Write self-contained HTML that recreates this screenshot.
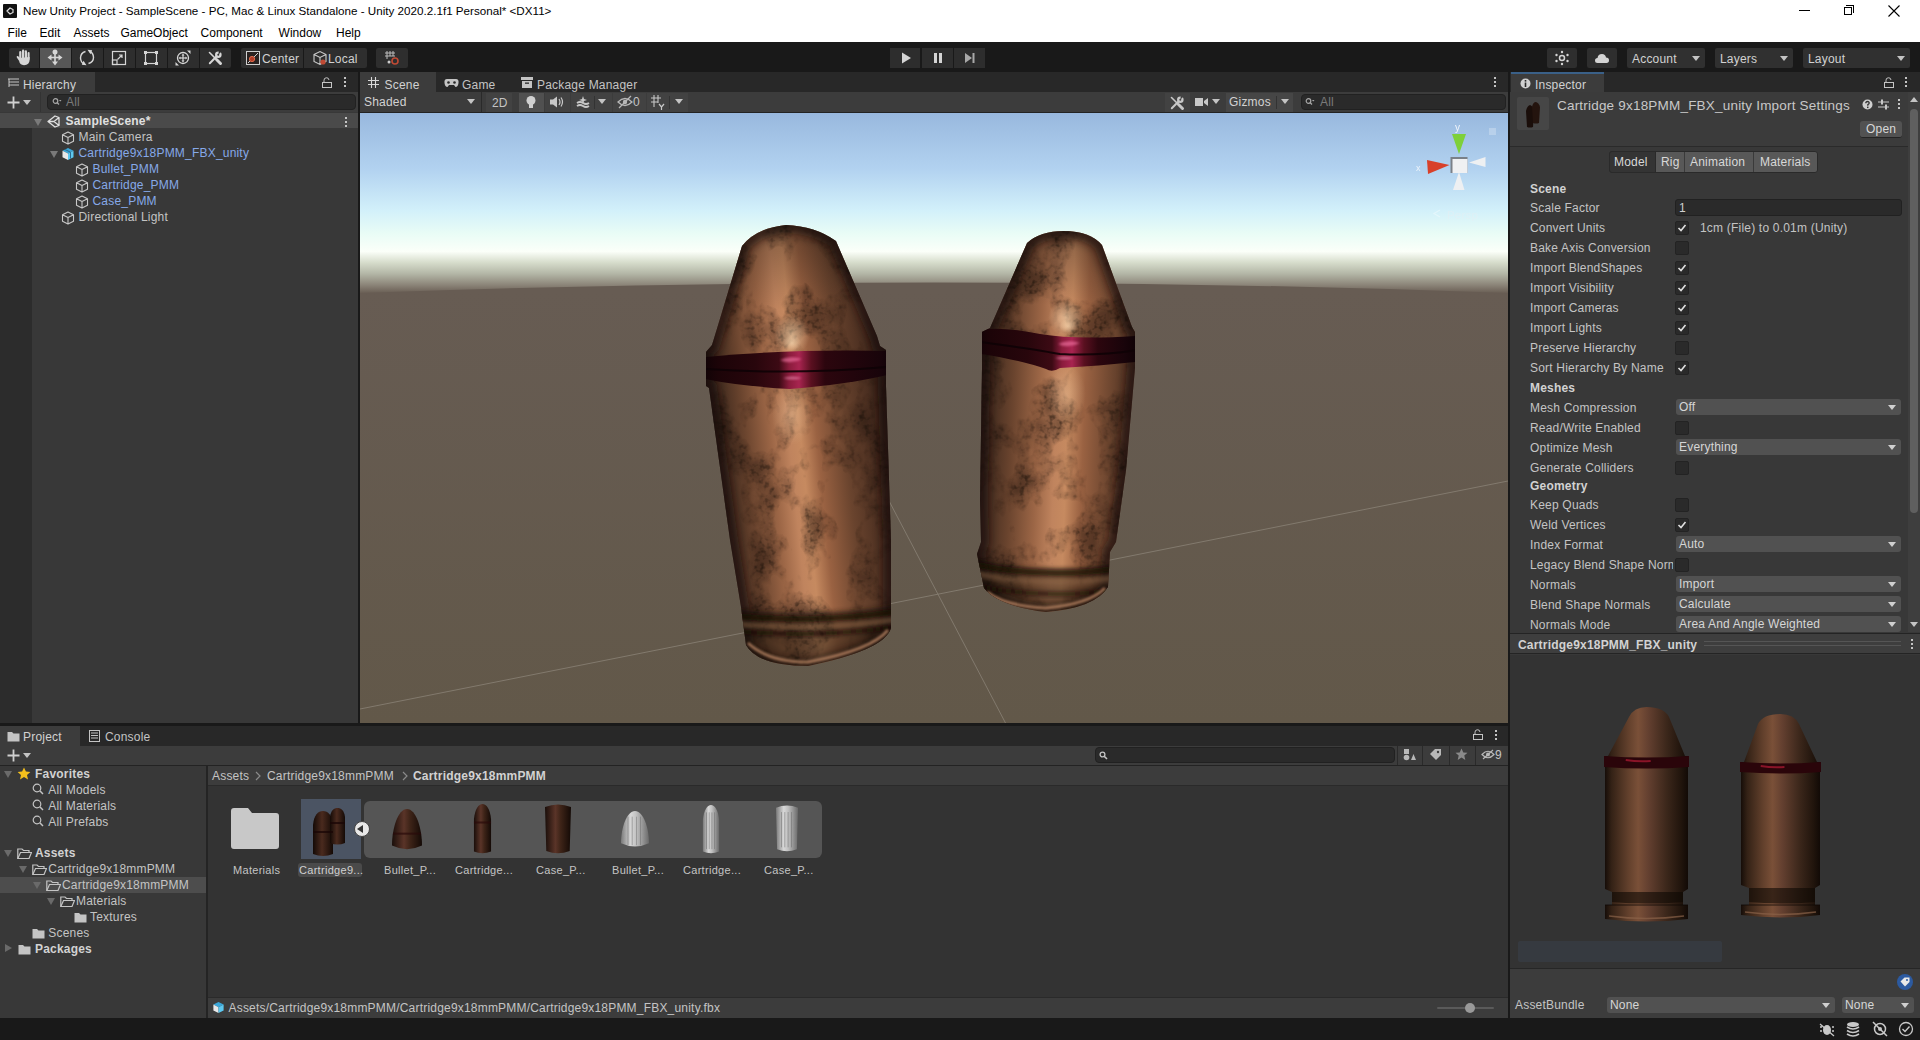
<!DOCTYPE html>
<html><head><meta charset="utf-8">
<style>
*{margin:0;padding:0;box-sizing:border-box}
html,body{width:1920px;height:1040px;overflow:hidden;background:#191919;font-family:"Liberation Sans",sans-serif;font-size:12px;letter-spacing:0.2px;color:#c4c4c4}
.a{position:absolute}
.t{position:absolute;white-space:nowrap;line-height:16px}
#title{left:0;top:0;width:1920px;height:42px;background:#fff;color:#000}
#toolbar{left:0;top:42px;width:1920px;height:30px;background:#191919}
.tb{position:absolute;top:48px;height:20px;background:#2e2e2e;border-radius:2px}
.tabbar{position:absolute;height:20px;background:#282828}
.tab{position:absolute;height:20px;background:#3c3c3c;border-top:1px solid #3c3c3c}
.panel{position:absolute;background:#383838}
.hdr{position:absolute;background:#3c3c3c}
.field{position:absolute;background:#2a2a2a;border:1px solid #212121;border-radius:3px}
.btn{position:absolute;background:#585858;border-radius:3px;border-bottom:1px solid #242424}
.dd{position:absolute;background:#515151;border-radius:3px;height:16px;color:#d8d8d8}
.arr{position:absolute;width:0;height:0;border-left:4px solid transparent;border-right:4px solid transparent;border-top:5px solid #c4c4c4}
.cb{position:absolute;width:14px;height:14px;background:#2a2a2a;border:1px solid #232323;border-radius:2px}
.lbl{position:absolute;left:1530px;white-space:nowrap;line-height:16px;color:#c4c4c4}
.bold{font-weight:bold}
</style></head><body>
<div id="title" class="a"></div>
<div id="toolbar" class="a"></div>

<!-- TITLE -->
<div class="a" style="left:3px;top:4px;width:14px;height:14px;background:#111;border-radius:1px"></div>
<svg class="a" style="left:5px;top:6px" width="10" height="10" viewBox="0 0 10 10"><path d="M2 5 L5 2 L8 3.5 L8 6.5 L5 8 Z" fill="none" stroke="#ddd" stroke-width="1.2"/></svg>
<div class="t" style="left:23px;top:4px;font-size:11.65px;letter-spacing:0;color:#000;line-height:14px">New Unity Project - SampleScene - PC, Mac &amp; Linux Standalone - Unity 2020.2.1f1 Personal* &lt;DX11&gt;</div>
<div class="a" style="left:1799px;top:10px;width:11px;height:1px;background:#000"></div>
<div class="a" style="left:1844px;top:7px;width:8px;height:8px;border:1px solid #000"></div>
<div class="a" style="left:1846px;top:5px;width:8px;height:8px;border-top:1px solid #000;border-right:1px solid #000"></div>
<svg class="a" style="left:1888px;top:5px" width="12" height="12" viewBox="0 0 12 12"><path d="M0.5 0.5 L11.5 11.5 M11.5 0.5 L0.5 11.5" stroke="#000" stroke-width="1.1"/></svg>
<div class="t" style="left:7.6px;top:26px;font-size:12px;letter-spacing:0;color:#000;line-height:14px">File</div>
<div class="t" style="left:39.6px;top:26px;font-size:12px;letter-spacing:0;color:#000;line-height:14px">Edit</div>
<div class="t" style="left:73.6px;top:26px;font-size:12px;letter-spacing:0;color:#000;line-height:14px">Assets</div>
<div class="t" style="left:120.4px;top:26px;font-size:12px;letter-spacing:0;color:#000;line-height:14px">GameObject</div>
<div class="t" style="left:200.6px;top:26px;font-size:12px;letter-spacing:0;color:#000;line-height:14px">Component</div>
<div class="t" style="left:278.6px;top:26px;font-size:12px;letter-spacing:0;color:#000;line-height:14px">Window</div>
<div class="t" style="left:336px;top:26px;font-size:12px;letter-spacing:0;color:#000;line-height:14px">Help</div>



<!-- TOOLBAR -->
<div class="tb" style="left:9px;width:30px;border-radius:2px 0 0 2px"></div>
<div class="tb" style="left:40px;width:31px;background:#575757;border-radius:0"></div>
<div class="tb" style="left:72px;width:31px;border-radius:0"></div>
<div class="tb" style="left:104px;width:31px;border-radius:0"></div>
<div class="tb" style="left:136px;width:31px;border-radius:0"></div>
<div class="tb" style="left:168px;width:31px;border-radius:0"></div>
<div class="tb" style="left:200px;width:31px;border-radius:0 2px 2px 0"></div>
<!-- hand -->
<svg class="a" style="left:16px;top:49px" width="16" height="17" viewBox="0 0 16 17"><g fill="#d6d6d6"><rect x="3.2" y="2" width="2.2" height="9" rx="1.1"/><rect x="6" y="0.5" width="2.2" height="10" rx="1.1"/><rect x="8.8" y="1.2" width="2.2" height="10" rx="1.1"/><rect x="11.6" y="3" width="2" height="8" rx="1"/><path d="M3.2 9 L3.2 12 Q3.5 16 8 16.2 Q13.6 16 13.6 11 L13.6 8 Z"/><path d="M3.5 12.5 L0.8 8.5 Q0.3 7.3 1.3 7 Q2 6.8 2.6 7.6 L4.5 10 Z"/></g></svg>
<!-- move -->
<svg class="a" style="left:47px;top:49px" width="16" height="17" viewBox="0 0 16 17"><g fill="#d6d6d6"><circle cx="8" cy="3" r="2.5"/><path d="M8 16.5 L11 12.5 L5 12.5 Z M0.5 8.5 L4.5 5.5 L4.5 11.5 Z M15.5 8.5 L11.5 5.5 L11.5 11.5 Z"/><rect x="7.2" y="4" width="1.6" height="9"/><rect x="4" y="7.7" width="8" height="1.6"/></g></svg>
<!-- rotate -->
<svg class="a" style="left:79px;top:49px" width="16" height="17" viewBox="0 0 16 17"><path d="M6.5 2.5 Q1.5 4 1.5 9 Q1.8 13.5 5 15" fill="none" stroke="#d6d6d6" stroke-width="1.4"/><path d="M9.5 14.5 Q14.5 13 14.5 8.5 Q14.3 4 11 2.5" fill="none" stroke="#d6d6d6" stroke-width="1.4"/><path d="M8.5 0.8 L13.2 1.2 L11.5 5.2 Z M7.5 16.2 L2.8 15.8 L4.5 11.8 Z" fill="#d6d6d6"/></svg>
<!-- scale -->
<svg class="a" style="left:111px;top:50px" width="16" height="16" viewBox="0 0 16 16"><rect x="1.5" y="1.5" width="13" height="13" fill="none" stroke="#d6d6d6" stroke-width="1.2"/><rect x="1.5" y="10" width="4.5" height="4.5" fill="none" stroke="#d6d6d6" stroke-width="1.2"/><path d="M6.5 9.5 L11 5 M8 5 L11 5 L11 8" fill="none" stroke="#d6d6d6" stroke-width="1.2"/></svg>
<!-- rect -->
<svg class="a" style="left:143px;top:50px" width="16" height="16" viewBox="0 0 16 16"><rect x="2.5" y="2.5" width="11" height="11" fill="none" stroke="#d6d6d6" stroke-width="1.2"/><g fill="#d6d6d6"><rect x="1" y="1" width="3" height="3"/><rect x="12" y="1" width="3" height="3"/><rect x="1" y="12" width="3" height="3"/><rect x="12" y="12" width="3" height="3"/></g></svg>
<!-- transform -->
<svg class="a" style="left:175px;top:50px" width="16" height="16" viewBox="0 0 16 16"><circle cx="8" cy="8" r="5.5" fill="none" stroke="#d6d6d6" stroke-width="1.3"/><g fill="#d6d6d6"><path d="M8 3.5 L9.5 5.5 L6.5 5.5 Z M8 12.5 L9.5 10.5 L6.5 10.5 Z M3.5 8 L5.5 6.5 L5.5 9.5 Z M12.5 8 L10.5 6.5 L10.5 9.5 Z"/><rect x="7.4" y="5" width="1.2" height="6"/><rect x="5" y="7.4" width="6" height="1.2"/><path d="M0.5 15.5 L0.5 12 L4 15.5 Z M15.5 0.5 L15.5 4 L12 0.5 Z"/></g></svg>
<!-- custom -->
<svg class="a" style="left:207px;top:50px" width="16" height="16" viewBox="0 0 16 16"><path d="M2.5 2.5 L9 9" stroke="#d6d6d6" stroke-width="1.6" stroke-linecap="round"/><path d="M9.5 9.5 L13.5 13.5" stroke="#d6d6d6" stroke-width="3" stroke-linecap="round"/><path d="M2.8 13.2 L9.5 6.5" stroke="#d6d6d6" stroke-width="2" stroke-linecap="round"/><circle cx="11.3" cy="4.7" r="3.3" fill="#d6d6d6"/><path d="M11.3 4.7 L15 1 L15 0 L12 0 Z" fill="#2e2e2e"/><circle cx="11.3" cy="4.7" r="1" fill="#2e2e2e"/></svg>

<div class="tb" style="left:241px;width:62px;border-radius:2px 0 0 2px"></div>
<div class="tb" style="left:304px;width:63px;border-radius:0 2px 2px 0"></div>
<svg class="a" style="left:246px;top:51px" width="14" height="14" viewBox="0 0 14 14"><rect x="0.5" y="0.5" width="13" height="13" fill="#2a2220" stroke="#cfcfcf" stroke-width="1"/><path d="M2 12 L12 2" stroke="#cfcfcf" stroke-width="1"/><circle cx="6" cy="8" r="2.6" fill="#b03a26" stroke="#e06a4a" stroke-width="1"/></svg>
<div class="t" style="left:262px;top:51px;color:#d2d2d2">Center</div>
<svg class="a" style="left:312px;top:50px" width="16" height="16" viewBox="0 0 16 16"><path d="M2 4.5 L8 1.5 L14 4.5 L14 11.5 L8 14.5 L2 11.5 Z M2 4.5 L8 7.5 L14 4.5 M8 7.5 L8 14.5" fill="none" stroke="#ccc" stroke-width="1.1"/><circle cx="11" cy="12" r="2.6" fill="#c04a34"/></svg>
<div class="t" style="left:328px;top:51px;color:#d2d2d2">Local</div>
<div class="tb" style="left:376px;width:32px"></div>
<svg class="a" style="left:384px;top:50px" width="16" height="16" viewBox="0 0 16 16"><g stroke="#bbb" stroke-width="1"><path d="M3 1 V9 M6 1 V6 M9 1 V6 M1 3 H11 M1 6 H11"/></g><circle cx="11" cy="11" r="3" fill="none" stroke="#c04a34" stroke-width="1.6"/><circle cx="5" cy="12" r="1.5" fill="#ccc"/></svg>

<!-- play -->
<div class="tb" style="left:890px;width:30px;background:#2d2d2d;border-radius:0"></div>
<div class="tb" style="left:922px;width:31px;background:#2d2d2d;border-radius:0"></div>
<div class="tb" style="left:954px;width:31px;background:#2d2d2d;border-radius:0"></div>
<svg class="a" style="left:898px;top:50px" width="16" height="16" viewBox="0 0 16 16"><path d="M4 2.5 L13 8 L4 13.5 Z" fill="#d4d4d4"/></svg>
<svg class="a" style="left:930px;top:50px" width="16" height="16" viewBox="0 0 16 16"><rect x="4" y="3" width="3" height="10" fill="#d4d4d4"/><rect x="9" y="3" width="3" height="10" fill="#d4d4d4"/></svg>
<svg class="a" style="left:962px;top:50px" width="16" height="16" viewBox="0 0 16 16"><path d="M3 3 L10 8 L3 13 Z" fill="#a8a8a8"/><rect x="10.5" y="3" width="2" height="10" fill="#a8a8a8"/></svg>

<!-- right -->
<div class="tb" style="left:1547px;width:30px"></div>
<svg class="a" style="left:1554px;top:50px" width="16" height="16" viewBox="0 0 16 16"><circle cx="8" cy="8" r="2.5" fill="none" stroke="#d4d4d4" stroke-width="1.5"/><g fill="#d4d4d4"><circle cx="8" cy="2" r="1.2"/><circle cx="8" cy="14" r="1.2"/><circle cx="2.5" cy="5" r="1.2"/><circle cx="13.5" cy="5" r="1.2"/><circle cx="2.5" cy="11" r="1.2"/><circle cx="13.5" cy="11" r="1.2"/></g></svg>
<div class="tb" style="left:1587px;width:30px"></div>
<svg class="a" style="left:1594px;top:50px" width="16" height="16" viewBox="0 0 16 16"><path d="M3.5 13 Q1 13 1 10.5 Q1 8 3.5 8 Q4 4 8 4 Q11.5 4 12 7.5 Q15 7.5 15 10.3 Q15 13 12.5 13 Z" fill="#d4d4d4"/></svg>
<div class="tb" style="left:1627px;width:78px;background:#303030"></div>
<div class="t" style="left:1632px;top:51px;color:#d2d2d2">Account</div>
<div class="arr" style="left:1692px;top:56px"></div>
<div class="tb" style="left:1715px;width:78px;background:#303030"></div>
<div class="t" style="left:1720px;top:51px;color:#d2d2d2">Layers</div>
<div class="arr" style="left:1780px;top:56px"></div>
<div class="tb" style="left:1803px;width:107px;background:#303030"></div>
<div class="t" style="left:1808px;top:51px;color:#d2d2d2">Layout</div>
<div class="arr" style="left:1897px;top:56px"></div>

<!-- Hierarchy -->
<div class="tabbar" style="left:0;top:72px;width:358px"></div>
<div class="tab" style="left:0;top:72px;width:95px"></div>
<div class="hdr" style="left:0;top:92px;width:358px;height:20px"></div>
<div class="panel" style="left:0;top:112px;width:358px;height:611px"></div>


<!-- HIERARCHY CONTENT -->
<div class="a" style="left:0;top:128px;width:32px;height:595px;background:#2c2c2c"></div>
<svg class="a" style="left:8px;top:78px" width="11" height="10" viewBox="0 0 11 10"><path d="M0 1 H11 M2.5 4 H11 M2.5 7 H11 M1 1 V9 M1 4 H2.5 M1 7 H2.5" stroke="#c4c4c4" stroke-width="1"/></svg>
<div class="t" style="left:23px;top:77px;color:#d2d2d2">Hierarchy</div>
<svg class="a" style="left:322px;top:77px" width="10" height="11" viewBox="0 0 10 11"><rect x="0.5" y="5.5" width="9" height="5" fill="none" stroke="#c4c4c4" stroke-width="1"/><path d="M2 5.5 V3.5 A2.5 2.5 0 0 1 7 3" fill="none" stroke="#c4c4c4" stroke-width="1"/></svg>
<div class="a" style="left:344px;top:77px;width:2px;height:2px;background:#c4c4c4;box-shadow:0 4px 0 #c4c4c4,0 8px 0 #c4c4c4"></div>
<svg class="a" style="left:7px;top:96px" width="13" height="13" viewBox="0 0 13 13"><path d="M6.5 0.5 V12.5 M0.5 6.5 H12.5" stroke="#d0d0d0" stroke-width="1.8"/></svg>
<div class="a" style="left:23px;top:100px;width:0;height:0;border-left:4px solid transparent;border-right:4px solid transparent;border-top:5px solid #c4c4c4"></div>
<div class="a" style="left:40px;top:92px;width:1px;height:20px;background:#333"></div>
<div class="field" style="left:47px;top:94px;width:309px;height:16px;border-radius:4px"></div>
<svg class="a" style="left:52px;top:97px" width="10" height="10" viewBox="0 0 10 10"><circle cx="3.5" cy="4" r="2.3" fill="none" stroke="#a8a8a8" stroke-width="1.2"/><path d="M5 5.5 L7 7.5" stroke="#a8a8a8" stroke-width="1.3"/><path d="M7 3 L9.5 3 L8.25 4.5 Z" fill="#a8a8a8"/></svg>
<div class="t" style="left:66px;top:94px;color:#7a7a7a">All</div>
<div class="a" style="left:0;top:113px;width:358px;height:15px;background:#4a4a4a"></div>
<div class="a" style="left:34px;top:119px;width:0;height:0;border-left:4px solid transparent;border-right:4px solid transparent;border-top:7px solid #7a7a7a"></div>
<svg class="a" style="left:47px;top:115px" width="13" height="13" viewBox="0 0 13 13"><path d="M1 6.5 L8 1 L12 2.5 L12 10.5 L8 12 Z M1 6.5 H7 L12 2.5 M7 6.5 L12 10.5" fill="none" stroke="#e0e0e0" stroke-width="1.3" stroke-linejoin="round"/></svg>
<div class="t bold" style="left:65.5px;top:113px;color:#e0e0e0">SampleScene*</div>
<div class="a" style="left:345px;top:117px;width:2px;height:2px;background:#c4c4c4;box-shadow:0 4px 0 #c4c4c4,0 8px 0 #c4c4c4"></div>
<svg class="a" style="left:61px;top:131px" width="14" height="14" viewBox="0 0 14 14"><path d="M7 1 L12.5 3.8 L12.5 10.2 L7 13 L1.5 10.2 L1.5 3.8 Z M1.5 3.8 L7 6.6 L12.5 3.8 M7 6.6 L7 13" fill="none" stroke="#c8c8c8" stroke-width="1.1" stroke-linejoin="round"/></svg>
<div class="t" style="left:78.5px;top:129px">Main Camera</div>
<div class="a" style="left:50px;top:151px;width:0;height:0;border-left:4px solid transparent;border-right:4px solid transparent;border-top:7px solid #7a7a7a"></div>
<svg class="a" style="left:61px;top:147px" width="14" height="14" viewBox="0 0 14 14"><path d="M7 1 L12.5 3.8 L7 6.6 L1.5 3.8 Z" fill="#3aa6d8"/><path d="M1.5 3.8 L7 6.6 L7 13 L1.5 10.2 Z" fill="#e8e8e8"/><path d="M12.5 3.8 L7 6.6 L7 13 L12.5 10.2 Z" fill="#5ec8f0"/><path d="M4 2.5 L9.5 5.2 L9.5 11.6" fill="none" stroke="#2a6a90" stroke-width="1"/></svg>
<div class="t" style="left:78.5px;top:145px;color:#86a9e8">Cartridge9x18PMM_FBX_unity</div>
<svg class="a" style="left:75px;top:163px" width="14" height="14" viewBox="0 0 14 14"><path d="M7 1 L12.5 3.8 L12.5 10.2 L7 13 L1.5 10.2 L1.5 3.8 Z M1.5 3.8 L7 6.6 L12.5 3.8 M7 6.6 L7 13" fill="none" stroke="#c8c8c8" stroke-width="1.1" stroke-linejoin="round"/></svg>
<div class="t" style="left:92.5px;top:161px;color:#86a9e8">Bullet_PMM</div>
<svg class="a" style="left:75px;top:179px" width="14" height="14" viewBox="0 0 14 14"><path d="M7 1 L12.5 3.8 L12.5 10.2 L7 13 L1.5 10.2 L1.5 3.8 Z M1.5 3.8 L7 6.6 L12.5 3.8 M7 6.6 L7 13" fill="none" stroke="#c8c8c8" stroke-width="1.1" stroke-linejoin="round"/></svg>
<div class="t" style="left:92.5px;top:177px;color:#86a9e8">Cartridge_PMM</div>
<svg class="a" style="left:75px;top:195px" width="14" height="14" viewBox="0 0 14 14"><path d="M7 1 L12.5 3.8 L12.5 10.2 L7 13 L1.5 10.2 L1.5 3.8 Z M1.5 3.8 L7 6.6 L12.5 3.8 M7 6.6 L7 13" fill="none" stroke="#c8c8c8" stroke-width="1.1" stroke-linejoin="round"/></svg>
<div class="t" style="left:92.5px;top:193px;color:#86a9e8">Case_PMM</div>
<svg class="a" style="left:61px;top:211px" width="14" height="14" viewBox="0 0 14 14"><path d="M7 1 L12.5 3.8 L12.5 10.2 L7 13 L1.5 10.2 L1.5 3.8 Z M1.5 3.8 L7 6.6 L12.5 3.8 M7 6.6 L7 13" fill="none" stroke="#c8c8c8" stroke-width="1.1" stroke-linejoin="round"/></svg>
<div class="t" style="left:78.5px;top:209px">Directional Light</div>

<!-- Scene -->
<div class="tabbar" style="left:360px;top:72px;width:1148px"></div>
<div class="tab" style="left:360px;top:72px;width:76px"></div>
<div class="hdr" style="left:360px;top:92px;width:1148px;height:20px"></div>
<div class="a" style="left:360px;top:112px;width:1148px;height:1px;background:#232323"></div>
<svg class="a" style="left:368px;top:77px" width="11" height="11" viewBox="0 0 11 11"><path d="M3.5 0 V11 M7.5 0 V11 M0 3.5 H11 M0 7.5 H11" stroke="#d8d8d8" stroke-width="1.1"/></svg>
<div class="t" style="left:384.5px;top:77px;color:#d2d2d2">Scene</div>
<svg class="a" style="left:444px;top:78px" width="15" height="10" viewBox="0 0 15 10"><path d="M3 1 H12 Q15 1 14.5 5 Q14 9 11.5 9 L10 7 H5 L3.5 9 Q1 9 0.5 5 Q0 1 3 1 Z" fill="#c4c4c4"/><circle cx="4.5" cy="4.5" r="1.3" fill="#282828"/><circle cx="10.5" cy="4.5" r="1.3" fill="#282828"/></svg>
<div class="t" style="left:462px;top:77px">Game</div>
<svg class="a" style="left:521px;top:77px" width="12" height="11" viewBox="0 0 12 11"><rect x="0" y="0" width="12" height="3" fill="#c4c4c4"/><path d="M1 4 H11 V11 H1 Z" fill="#c4c4c4"/><rect x="4" y="5.5" width="4" height="1.3" fill="#282828"/></svg>
<div class="t" style="left:537px;top:77px">Package Manager</div>
<div class="a" style="left:1494px;top:77px;width:2px;height:2px;background:#c4c4c4;box-shadow:0 4px 0 #c4c4c4,0 8px 0 #c4c4c4"></div>
<!-- scene toolbar -->
<div class="t" style="left:364px;top:94px;color:#d2d2d2">Shaded</div>
<div class="arr" style="left:467px;top:99px;border-top-color:#c4c4c4"></div>
<div class="a" style="left:481px;top:92px;width:1px;height:20px;background:#2a2a2a"></div>
<div class="a" style="left:486px;top:93px;width:26px;height:19px;background:#424242"></div>
<div class="t" style="left:492px;top:95px;color:#c4c4c4">2D</div>
<div class="a" style="left:519px;top:93px;width:25px;height:19px;background:#505050"></div>
<div class="a" style="left:545px;top:93px;width:25px;height:19px;background:#424242"></div>
<div class="a" style="left:571px;top:93px;width:41px;height:19px;background:#424242"></div>
<div class="a" style="left:613px;top:93px;width:33px;height:19px;background:#424242"></div>
<div class="a" style="left:647px;top:93px;width:41px;height:19px;background:#424242"></div>
<svg class="a" style="left:525px;top:95px" width="12" height="15" viewBox="0 0 12 15"><circle cx="6" cy="5.5" r="4.5" fill="#d0d0d0"/><rect x="4" y="9" width="4" height="4" fill="#d0d0d0"/></svg>
<svg class="a" style="left:550px;top:96px" width="14" height="12" viewBox="0 0 14 12"><rect x="0" y="3.5" width="3" height="5" fill="#c8c8c8"/><path d="M3 3.5 L7 0.5 V11.5 L3 8.5 Z" fill="#c8c8c8"/><path d="M9 3 Q11 6 9 9 M11 1.5 Q14 6 11 10.5" fill="none" stroke="#c8c8c8" stroke-width="1.2"/></svg>
<svg class="a" style="left:576px;top:95px" width="15" height="14" viewBox="0 0 15 14"><path d="M1 8 Q4 6 7 8 Q10 10 13 8 M1 11 Q4 9 7 11 Q10 13 13 11" fill="none" stroke="#c8c8c8" stroke-width="1.8"/><path d="M7 1 L8 4 L11 5 L8 6 L7 9 L6 6 L3 5 L6 4 Z" fill="#c8c8c8"/></svg>
<div class="a" style="left:594px;top:96px;width:1px;height:13px;background:#333"></div>
<div class="arr" style="left:598px;top:99px;border-top-color:#c4c4c4"></div>
<svg class="a" style="left:617px;top:95px" width="16" height="14" viewBox="0 0 16 14"><path d="M1 7 Q8 0 15 7 Q8 14 1 7 Z" fill="none" stroke="#b8b8b8" stroke-width="1.3"/><circle cx="8" cy="7" r="2.2" fill="#b8b8b8"/><path d="M2 13 L14 1" stroke="#b8b8b8" stroke-width="1.3"/></svg>
<div class="t" style="left:633px;top:94px;color:#c4c4c4">0</div>
<svg class="a" style="left:651px;top:95px" width="14" height="15" viewBox="0 0 14 15"><path d="M3 0 V12 M7 0 V8 M0 3 H10 M0 7 H7" stroke="#c8c8c8" stroke-width="1.1"/><path d="M8 9 L10.5 12 L13 9 M10.5 12 V15" fill="none" stroke="#c8c8c8" stroke-width="1.2"/></svg>
<div class="a" style="left:669px;top:96px;width:1px;height:13px;background:#333"></div>
<div class="arr" style="left:675px;top:99px;border-top-color:#c4c4c4"></div>
<!-- right -->
<div class="a" style="left:1165px;top:93px;width:25px;height:19px;background:#424242"></div>
<svg class="a" style="left:1169px;top:95px" width="16" height="16" viewBox="0 0 16 16"><path d="M2.5 2.5 L9 9" stroke="#c8c8c8" stroke-width="1.6" stroke-linecap="round"/><path d="M9.5 9.5 L13.5 13.5" stroke="#c8c8c8" stroke-width="3" stroke-linecap="round"/><path d="M2.8 13.2 L9.5 6.5" stroke="#c8c8c8" stroke-width="2" stroke-linecap="round"/><circle cx="11.3" cy="4.7" r="3.3" fill="#c8c8c8"/><path d="M11.3 4.7 L15 1 L15 0 L12 0 Z" fill="#424242"/><circle cx="11.3" cy="4.7" r="1" fill="#424242"/></svg>
<div class="a" style="left:1191px;top:93px;width:34px;height:19px;background:#3c3c3c"></div>
<svg class="a" style="left:1195px;top:97px" width="13" height="10" viewBox="0 0 13 10"><rect x="0" y="1" width="8" height="8" fill="#c8c8c8"/><path d="M9 4 L13 1 V9 L9 6 Z" fill="#c8c8c8"/></svg>
<div class="arr" style="left:1212px;top:99px;border-top-color:#c4c4c4"></div>
<div class="a" style="left:1226px;top:93px;width:67px;height:19px;background:#464646"></div>
<div class="t" style="left:1229px;top:94px;color:#d2d2d2">Gizmos</div>
<div class="a" style="left:1276px;top:96px;width:1px;height:13px;background:#333"></div>
<div class="arr" style="left:1281px;top:99px;border-top-color:#c4c4c4"></div>
<div class="field" style="left:1301px;top:94px;width:205px;height:16px;border-radius:4px"></div>
<svg class="a" style="left:1305px;top:97px" width="10" height="10" viewBox="0 0 10 10"><circle cx="3.5" cy="4" r="2.3" fill="none" stroke="#a8a8a8" stroke-width="1.2"/><path d="M5 5.5 L7 7.5" stroke="#a8a8a8" stroke-width="1.3"/><path d="M7 3 L9.5 3 L8.25 4.5 Z" fill="#a8a8a8"/></svg>
<div class="t" style="left:1320px;top:94px;color:#7a7a7a">All</div>
<svg class="a" style="left:360px;top:113px" width="1148" height="610" viewBox="360 113 1148 610">
<defs>
<linearGradient id="sky" x1="0" y1="113" x2="0" y2="300" gradientUnits="userSpaceOnUse">
<stop offset="0" stop-color="#98b8de"/>
<stop offset="0.3" stop-color="#b2d2f0"/>
<stop offset="0.52" stop-color="#d2f0fa"/>
<stop offset="0.64" stop-color="#e8fcf6"/>
<stop offset="0.74" stop-color="#fbfff9"/>
<stop offset="0.8" stop-color="#d6dccb"/>
<stop offset="0.86" stop-color="#b3b6a6"/>
<stop offset="0.92" stop-color="#8b8478"/>
<stop offset="0.96" stop-color="#6c6157"/>
<stop offset="1" stop-color="#675c52"/>
</linearGradient>
<linearGradient id="gnd" x1="0" y1="290" x2="0" y2="723" gradientUnits="userSpaceOnUse">
<stop offset="0" stop-color="#675c53"/>
<stop offset="1" stop-color="#625849"/>
</linearGradient>
<linearGradient id="cop1" x1="706" y1="0" x2="892" y2="0" gradientUnits="userSpaceOnUse">
<stop offset="0" stop-color="#1e140e"/>
<stop offset="0.07" stop-color="#3e2a1c"/>
<stop offset="0.2" stop-color="#6a4630"/>
<stop offset="0.34" stop-color="#94623f"/>
<stop offset="0.46" stop-color="#c28a5c"/>
<stop offset="0.53" stop-color="#ba8256"/>
<stop offset="0.66" stop-color="#8c5c3c"/>
<stop offset="0.8" stop-color="#64422c"/>
<stop offset="0.91" stop-color="#422c1e"/>
<stop offset="1" stop-color="#1c130c"/>
</linearGradient>
<linearGradient id="cop2" x1="978" y1="0" x2="1136" y2="0" gradientUnits="userSpaceOnUse">
<stop offset="0" stop-color="#1e140e"/>
<stop offset="0.07" stop-color="#3e2a1c"/>
<stop offset="0.2" stop-color="#6a4630"/>
<stop offset="0.38" stop-color="#94623f"/>
<stop offset="0.5" stop-color="#c28a5c"/>
<stop offset="0.5700000000000001" stop-color="#ba8256"/>
<stop offset="0.7000000000000001" stop-color="#8c5c3c"/>
<stop offset="0.8" stop-color="#64422c"/>
<stop offset="0.91" stop-color="#422c1e"/>
<stop offset="1" stop-color="#1c130c"/>
</linearGradient>
<linearGradient id="band1" x1="706" y1="0" x2="886" y2="0" gradientUnits="userSpaceOnUse">
<stop offset="0" stop-color="#22060a"/>
<stop offset="0.3" stop-color="#320810"/>
<stop offset="0.42" stop-color="#440a18"/>
<stop offset="0.49" stop-color="#a02850"/>
<stop offset="0.56" stop-color="#6a1428"/>
<stop offset="0.75" stop-color="#320810"/>
<stop offset="1" stop-color="#1a0408"/>
</linearGradient>
<linearGradient id="band2" x1="982" y1="0" x2="1135" y2="0" gradientUnits="userSpaceOnUse">
<stop offset="0" stop-color="#22060a"/>
<stop offset="0.3" stop-color="#320810"/>
<stop offset="0.47" stop-color="#440a18"/>
<stop offset="0.55" stop-color="#a02850"/>
<stop offset="0.63" stop-color="#6a1428"/>
<stop offset="0.8" stop-color="#320810"/>
<stop offset="1" stop-color="#1a0408"/>
</linearGradient>
<radialGradient id="spec" cx="0.5" cy="0.5" r="0.5">
<stop offset="0" stop-color="#ffe0b8" stop-opacity="0.55"/>
<stop offset="1" stop-color="#ffe0b8" stop-opacity="0"/>
</radialGradient>
<linearGradient id="vshade" x1="0" y1="0" x2="0" y2="1">
<stop offset="0" stop-color="#000" stop-opacity="0.15"/>
<stop offset="0.5" stop-color="#000" stop-opacity="0"/>
<stop offset="1" stop-color="#000" stop-opacity="0.1"/>
</linearGradient>
<filter id="blur4" x="-20%" y="-20%" width="140%" height="140%"><feGaussianBlur stdDeviation="5"/></filter>
<filter id="blur1" x="-20%" y="-20%" width="140%" height="140%"><feGaussianBlur stdDeviation="0.8"/></filter>
<filter id="blur2" x="-20%" y="-20%" width="140%" height="140%"><feGaussianBlur stdDeviation="2"/></filter>
<linearGradient id="topdark" x1="0" y1="0" x2="0" y2="1"><stop offset="0" stop-color="#000" stop-opacity="0.35"/><stop offset="1" stop-color="#000" stop-opacity="0"/></linearGradient>
<filter id="grunge" x="0" y="0" width="100%" height="100%" color-interpolation-filters="sRGB">
<feTurbulence type="fractalNoise" baseFrequency="0.028 0.02" numOctaves="4" seed="7" result="n1"/>
<feColorMatrix in="n1" values="0 0 0 0 0.12  0 0 0 0 0.07  0 0 0 0 0.05  0 0 0 -3.2 1.75" result="a1"/>
<feTurbulence type="fractalNoise" baseFrequency="0.2" numOctaves="2" seed="11" result="n2"/>
<feColorMatrix in="n2" values="0 0 0 0 0.08  0 0 0 0 0.05  0 0 0 0 0.03  0 0 0 -3 1.6" result="a2"/>
<feComposite in="a2" in2="a1" operator="in" result="sp"/>
<feComponentTransfer in="a1" result="a1s"><feFuncA type="linear" slope="0.6"/></feComponentTransfer>
<feMerge><feMergeNode in="a1s"/><feMergeNode in="sp"/></feMerge>
</filter>
</defs>
<rect x="360" y="113" width="1148" height="610" fill="url(#gnd)"/>
<path d="M360 113 H1508 V293 Q934 272 360 293 Z" fill="url(#sky)"/>
<!-- grid lines -->
<path d="M360 709 L1508 481" stroke="#8a8276" stroke-width="1" opacity="0.8"/>
<path d="M866 457 L1005.5 723" stroke="#8a8276" stroke-width="1" opacity="0.8"/>

<!-- left bullet -->
<defs><linearGradient id="gL" x1="706" y1="0" x2="891" y2="0" gradientUnits="userSpaceOnUse" gradientTransform="matrix(1 0 0.1 1 -38.8 0)"><stop offset="0.000" stop-color="#1c120c"/><stop offset="0.065" stop-color="#402a1e"/><stop offset="0.184" stop-color="#6a442e"/><stop offset="0.324" stop-color="#9c6646"/><stop offset="0.422" stop-color="#c0845e"/><stop offset="0.486" stop-color="#c68a60"/><stop offset="0.573" stop-color="#9a6242"/><stop offset="0.724" stop-color="#6a442e"/><stop offset="0.876" stop-color="#4a2e20"/><stop offset="0.968" stop-color="#2a1a12"/><stop offset="1.000" stop-color="#180e08"/></linearGradient></defs>
<clipPath id="cL"><path d="M786 225 Q815 226 836 241 L877 336 L880 346 L886 350 L886 386 L891 540 L891 628 Q885 650 808 666 Q758 666 746 645 L741 607 L730 540 L709 388 L706 386 L706 352 L712 345 L742 246 Q756 228 786 225 Z"/></clipPath>
<g clip-path="url(#cL)">
<rect x="696" y="200" width="205" height="480" fill="url(#gL)"/>
<path d="M786 225 Q815 226 836 241 L877 336 L880 346 L886 350 L886 386 L891 540 L891 628 Q885 650 808 666 Q758 666 746 645 L741 607 L730 540 L709 388 L706 386 L706 352 L712 345 L742 246 Q756 228 786 225 Z" fill="none" stroke="#1a100a" stroke-width="16" filter="url(#blur4)" opacity="0.7"/>
<rect x="696" y="200" width="205" height="480" filter="url(#grunge)" opacity="0.7"/>
<rect x="696" y="220" width="205" height="90" fill="url(#topdark)"/>
<ellipse cx="792" cy="335" rx="18" ry="20" fill="url(#spec)" opacity="1"/><ellipse cx="792" cy="343" rx="9" ry="8" fill="url(#spec)" opacity="1"/>
<ellipse cx="792" cy="415" rx="20" ry="30" fill="url(#spec)" opacity="0.5"/>
<!-- bottom -->
<path d="M696 604 Q798.5 620 901 604 L901 700 L696 700 Z" fill="#1e140c" opacity="0.45" filter="url(#blur2)"/><path d="M696 608 Q798.5 624 901 608 L901 614 Q798.5 630 696 614 Z" fill="#120a06" opacity="0.75" filter="url(#blur2)"/><path d="M696 616 Q798.5 632 901 616 L901 622 Q798.5 638 696 622 Z" fill="#9a7050" opacity="0.45" filter="url(#blur2)"/><path d="M696 624 Q798.5 640 901 624 L901 628 Q798.5 644 696 628 Z" fill="#120a06" opacity="0.75" filter="url(#blur2)"/><path d="M748 643 Q768 662 808 662 Q872 650 888 630" fill="none" stroke="#c08a68" stroke-width="3" opacity="0.75" filter="url(#blur1)"/>
<!-- band -->
<path d="M705 357 Q790 349 887 351 L887 375 Q850 384 790 389 Q740 386 705 379 Z" fill="url(#bdL)"/>
<path d="M705 369 Q790 375 887 367" fill="none" stroke="#0e0206" stroke-width="2" opacity="0.9"/>
<path d="M780 360 Q790 355 802 359 Q790 365 780 360 Z" fill="#ff80b0" opacity="0.55" filter="url(#blur1)"/>
<path d="M783 378 Q792 375 802 378 Q792 381 783 378 Z" fill="#ffa0c8" opacity="0.5" filter="url(#blur1)"/>
</g>
<defs><linearGradient id="bdL" x1="706" y1="0" x2="891" y2="0" gradientUnits="userSpaceOnUse"><stop offset="0.000" stop-color="#120306"/><stop offset="0.065" stop-color="#1c0408"/><stop offset="0.265" stop-color="#28060c"/><stop offset="0.395" stop-color="#3c0a14"/><stop offset="0.449" stop-color="#8a1c3c"/><stop offset="0.503" stop-color="#a82450"/><stop offset="0.568" stop-color="#5a1020"/><stop offset="0.643" stop-color="#2c060e"/><stop offset="0.946" stop-color="#18040a"/><stop offset="1.000" stop-color="#100206"/></linearGradient></defs>

<!-- right bullet -->
<defs><linearGradient id="gR" x1="978" y1="0" x2="1135" y2="0" gradientUnits="userSpaceOnUse" gradientTransform="matrix(1 0 -0.04 1 14.8 0)"><stop offset="0.000" stop-color="#1c120c"/><stop offset="0.076" stop-color="#402a1e"/><stop offset="0.229" stop-color="#6a442e"/><stop offset="0.395" stop-color="#9c6646"/><stop offset="0.510" stop-color="#c0845e"/><stop offset="0.586" stop-color="#c68a60"/><stop offset="0.688" stop-color="#9a6242"/><stop offset="0.866" stop-color="#6a442e"/><stop offset="1.000" stop-color="#4a2e20"/><stop offset="0.962" stop-color="#2a1a12"/><stop offset="1.000" stop-color="#180e08"/></linearGradient></defs>
<clipPath id="cR"><path d="M1064 231 Q1090 231 1102 245 L1132 327 L1135 332 L1135 368 L1126 470 L1116 542 L1110 552 L1108 587 Q1095 608 1046 612 Q998 606 984 588 L977 554 L981 542 L980 500 L982 368 L982 332 L990 328 L1027 243 Q1040 231 1064 231 Z"/></clipPath>
<g clip-path="url(#cR)">
<rect x="968" y="200" width="177" height="480" fill="url(#gR)"/>
<path d="M1064 231 Q1090 231 1102 245 L1132 327 L1135 332 L1135 368 L1126 470 L1116 542 L1110 552 L1108 587 Q1095 608 1046 612 Q998 606 984 588 L977 554 L981 542 L980 500 L982 368 L982 332 L990 328 L1027 243 Q1040 231 1064 231 Z" fill="none" stroke="#1a100a" stroke-width="16" filter="url(#blur4)" opacity="0.7"/>
<rect x="968" y="200" width="177" height="480" filter="url(#grunge)" opacity="0.7"/>
<rect x="968" y="225" width="177" height="80" fill="url(#topdark)"/>
<ellipse cx="1066" cy="318" rx="18" ry="18" fill="url(#spec)" opacity="1"/><ellipse cx="1068" cy="326" rx="9" ry="7" fill="url(#spec)" opacity="1"/>
<ellipse cx="1066" cy="394" rx="20" ry="30" fill="url(#spec)" opacity="0.5"/>
<!-- bottom -->
<path d="M968 558 Q1056.5 578 1145 558 L1145 700 L968 700 Z" fill="#1e140c" opacity="0.45" filter="url(#blur2)"/><path d="M968 560 Q1056.5 580 1145 560 L1145 566 Q1056.5 586 968 566 Z" fill="#120a06" opacity="0.75" filter="url(#blur2)"/><path d="M968 569 Q1056.5 589 1145 569 L1145 575 Q1056.5 595 968 575 Z" fill="#9a7050" opacity="0.45" filter="url(#blur2)"/><path d="M968 582 Q1056.5 602 1145 582 L1145 586 Q1056.5 606 968 586 Z" fill="#120a06" opacity="0.75" filter="url(#blur2)"/><path d="M987 592 Q1004 606 1046 608 Q1090 604 1105 588" fill="none" stroke="#c08a68" stroke-width="3" opacity="0.75" filter="url(#blur1)"/>
<!-- band -->
<path d="M981 330 Q1000 326 1040 334 Q1075 340 1136 336 L1136 362 Q1100 366 1060 368 Q1052 373 1046 369 Q1020 360 981 354 Z" fill="url(#bdR)"/>
<path d="M981 342 Q1040 350 1060 354 Q1100 356 1136 350" fill="none" stroke="#0e0206" stroke-width="2" opacity="0.9"/>
<path d="M1058 344 Q1068 339 1080 343 Q1068 349 1058 344 Z" fill="#ff80b0" opacity="0.55" filter="url(#blur1)"/>
<path d="M1055 358 Q1064 355 1074 358 Q1064 361 1055 358 Z" fill="#ffa0c8" opacity="0.5" filter="url(#blur1)"/>
</g>
<defs><linearGradient id="bdR" x1="978" y1="0" x2="1135" y2="0" gradientUnits="userSpaceOnUse"><stop offset="0.000" stop-color="#120306"/><stop offset="0.076" stop-color="#1c0408"/><stop offset="0.318" stop-color="#28060c"/><stop offset="0.471" stop-color="#3c0a14"/><stop offset="0.535" stop-color="#8a1c3c"/><stop offset="0.599" stop-color="#a82450"/><stop offset="0.675" stop-color="#5a1020"/><stop offset="0.764" stop-color="#2c060e"/><stop offset="0.936" stop-color="#18040a"/><stop offset="1.000" stop-color="#100206"/></linearGradient></defs>

<!-- gizmo -->
<path d="M1452 134 L1466 134 L1459 154 Z" fill="#7ed03a"/>
<path d="M1427 160 L1449.5 165 L1428 174 Z" fill="#d8402a"/>
<path d="M1469 162.5 L1485.5 157 L1485.5 167 Z" fill="#eef0f2"/>
<path d="M1459 172 L1464.5 190 L1453 190 Z" fill="#eef0f2"/>
<rect x="1450.5" y="157" width="17" height="16" fill="#7a8088"/>
<rect x="1452.5" y="159" width="15" height="14" fill="#eff0f2"/>
<text x="1455" y="131" font-family="Liberation Sans" font-size="10" fill="#fff" opacity="0.85">y</text>
<text x="1416" y="171" font-family="Liberation Sans" font-size="9" fill="#fff" opacity="0.75">x</text>
<rect x="1489" y="128" width="7" height="7" fill="#fff" opacity="0.25"/>
<path d="M1440 210 L1434 213.5 L1440 217" stroke="#fff" stroke-width="1.3" fill="none" opacity="0.35"/>
<text x="1447" y="219" font-family="Liberation Sans" font-size="11.5" fill="#e8eef2" opacity="0.45">Persp</text>
</svg>


<!-- Project -->
<div class="tabbar" style="left:0;top:726px;width:1508px"></div>
<div class="tab" style="left:0;top:726px;width:80px"></div>
<div class="hdr" style="left:0;top:746px;width:1508px;height:20px"></div>
<div class="a" style="left:0;top:765px;width:1508px;height:1px;background:#232323"></div>
<div class="panel" style="left:0;top:766px;width:206px;height:252px"></div>
<div class="a" style="left:206px;top:766px;width:2px;height:252px;background:#242424"></div>
<div class="a" style="left:208px;top:766px;width:1300px;height:20px;background:#3c3c3c;border-bottom:1px solid #2a2a2a"></div>
<div class="a" style="left:208px;top:786px;width:1300px;height:211px;background:#333333"></div>
<div class="a" style="left:208px;top:997px;width:1300px;height:21px;background:#3c3c3c;border-top:1px solid #2a2a2a"></div>
<svg class="a" style="left:7px;top:731px" width="13" height="11" viewBox="0 0 13 11"><path d="M0.5 1 H5 L6.5 2.5 H12.5 V10.5 H0.5 Z" fill="#c4c4c4"/></svg>
<div class="t" style="left:23px;top:729px;color:#d2d2d2">Project</div>
<svg class="a" style="left:89px;top:730px" width="11" height="12" viewBox="0 0 11 12"><rect x="0.5" y="0.5" width="10" height="11" fill="none" stroke="#c4c4c4"/><path d="M2 3 H9 M2 5.5 H9 M2 8 H9" stroke="#c4c4c4"/></svg>
<div class="t" style="left:105px;top:729px;color:#c4c4c4">Console</div>
<svg class="a" style="left:7px;top:749px" width="13" height="13" viewBox="0 0 13 13"><path d="M6.5 0.5 V12.5 M0.5 6.5 H12.5" stroke="#d0d0d0" stroke-width="1.8"/></svg>
<div class="a" style="left:23px;top:753px;width:0;height:0;border-left:4px solid transparent;border-right:4px solid transparent;border-top:5px solid #c4c4c4"></div>
<svg class="a" style="left:1473px;top:729px" width="10" height="11" viewBox="0 0 10 11"><rect x="0.5" y="5.5" width="9" height="5" fill="none" stroke="#c4c4c4" stroke-width="1"/><path d="M2 5.5 V3.5 A2.5 2.5 0 0 1 7 3" fill="none" stroke="#c4c4c4" stroke-width="1"/></svg>
<div class="a" style="left:1495px;top:730px;width:2px;height:2px;background:#c4c4c4;box-shadow:0 4px 0 #c4c4c4,0 8px 0 #c4c4c4"></div>
<div class="field" style="left:1095px;top:747px;width:300px;height:16px;border-radius:4px"></div>
<svg class="a" style="left:1099px;top:751px" width="9" height="9" viewBox="0 0 9 9"><circle cx="3.5" cy="3.5" r="2.4" fill="none" stroke="#c4c4c4" stroke-width="1.3"/><path d="M5.2 5.2 L8 8" stroke="#c4c4c4" stroke-width="1.6"/></svg>
<div class="a" style="left:1397px;top:746px;width:1px;height:19px;background:#2a2a2a"></div>
<div class="a" style="left:1422px;top:746px;width:1px;height:19px;background:#2a2a2a"></div>
<div class="a" style="left:1449px;top:746px;width:1px;height:19px;background:#2a2a2a"></div>
<div class="a" style="left:1475px;top:746px;width:1px;height:19px;background:#2a2a2a"></div>
<svg class="a" style="left:1403px;top:748px" width="13" height="13" viewBox="0 0 13 13"><rect x="1" y="1" width="5" height="5" fill="#b8b8b8"/><circle cx="3.5" cy="9.5" r="2.8" fill="#b8b8b8"/><path d="M8 12 L10.5 6 L13 12 Z" fill="#b8b8b8"/></svg>
<svg class="a" style="left:1429px;top:748px" width="13" height="13" viewBox="0 0 13 13"><path d="M1 6 L6 1 L12 1 L12 7 L7 12 Z" fill="#b8b8b8"/><circle cx="9" cy="4" r="1.2" fill="#3c3c3c"/></svg>
<svg class="a" style="left:1455px;top:748px" width="13" height="13" viewBox="0 0 13 13"><path d="M6.5 0.5 L8.3 4.5 L12.5 4.8 L9.3 7.6 L10.3 12 L6.5 9.6 L2.7 12 L3.7 7.6 L0.5 4.8 L4.7 4.5 Z" fill="#8a8a8a"/></svg>
<svg class="a" style="left:1481px;top:749px" width="14" height="11" viewBox="0 0 14 11"><path d="M1 5.5 Q7 -1 13 5.5 Q7 12 1 5.5 Z" fill="none" stroke="#b8b8b8" stroke-width="1.2"/><circle cx="7" cy="5.5" r="2" fill="#b8b8b8"/><path d="M2 10 L12 1" stroke="#b8b8b8" stroke-width="1.2"/></svg>
<div class="t" style="left:1495px;top:747px;color:#c4c4c4">9</div>

<!-- tree -->
<div class="a" style="left:4px;top:771px;width:0;height:0;border-left:4px solid transparent;border-right:4px solid transparent;border-top:7px solid #6a6a6a"></div>
<svg class="a" style="left:17px;top:767px" width="14" height="13" viewBox="0 0 14 13"><path d="M7 0.5 L8.9 4.6 L13.4 5 L10 8 L11 12.5 L7 10.1 L3 12.5 L4 8 L0.6 5 L5.1 4.6 Z" fill="#f4c01c"/></svg>
<div class="t bold" style="left:35px;top:766px;color:#d2d2d2">Favorites</div>
<svg class="a" style="left:32px;top:783px" width="12" height="12" viewBox="0 0 12 12"><circle cx="5" cy="5" r="3.8" fill="none" stroke="#c4c4c4" stroke-width="1.2"/><path d="M7.8 7.8 L11 11" stroke="#c4c4c4" stroke-width="1.5"/></svg><div class="t" style="left:48.3px;top:782px">All Models</div>
<svg class="a" style="left:32px;top:799px" width="12" height="12" viewBox="0 0 12 12"><circle cx="5" cy="5" r="3.8" fill="none" stroke="#c4c4c4" stroke-width="1.2"/><path d="M7.8 7.8 L11 11" stroke="#c4c4c4" stroke-width="1.5"/></svg><div class="t" style="left:48.3px;top:798px">All Materials</div>
<svg class="a" style="left:32px;top:815px" width="12" height="12" viewBox="0 0 12 12"><circle cx="5" cy="5" r="3.8" fill="none" stroke="#c4c4c4" stroke-width="1.2"/><path d="M7.8 7.8 L11 11" stroke="#c4c4c4" stroke-width="1.5"/></svg><div class="t" style="left:48.3px;top:814px">All Prefabs</div>
<div class="a" style="left:4px;top:850px;width:0;height:0;border-left:4px solid transparent;border-right:4px solid transparent;border-top:7px solid #6a6a6a"></div>
<svg class="a" style="left:17px;top:848px" width="15" height="11" viewBox="0 0 15 11"><path d="M0.8 10.5 V1 H5 L6.5 2.5 H12 V4.5" fill="none" stroke="#c4c4c4" stroke-width="1.2"/><path d="M0.8 10.5 L3.5 4.5 H14.5 L12 10.5 Z" fill="none" stroke="#c4c4c4" stroke-width="1.2"/></svg>
<div class="t bold" style="left:35px;top:845px;color:#d2d2d2">Assets</div>
<div class="a" style="left:19px;top:866px;width:0;height:0;border-left:4px solid transparent;border-right:4px solid transparent;border-top:7px solid #6a6a6a"></div>
<svg class="a" style="left:32px;top:864px" width="15" height="11" viewBox="0 0 15 11"><path d="M0.8 10.5 V1 H5 L6.5 2.5 H12 V4.5" fill="none" stroke="#c4c4c4" stroke-width="1.2"/><path d="M0.8 10.5 L3.5 4.5 H14.5 L12 10.5 Z" fill="none" stroke="#c4c4c4" stroke-width="1.2"/></svg>
<div class="t" style="left:48.3px;top:861px">Cartridge9x18mmPMM</div>
<div class="a" style="left:0;top:877px;width:206px;height:16px;background:#4d4d4d"></div>
<div class="a" style="left:33px;top:882px;width:0;height:0;border-left:4px solid transparent;border-right:4px solid transparent;border-top:7px solid #6a6a6a"></div>
<svg class="a" style="left:46px;top:880px" width="15" height="11" viewBox="0 0 15 11"><path d="M0.8 10.5 V1 H5 L6.5 2.5 H12 V4.5" fill="none" stroke="#c4c4c4" stroke-width="1.2"/><path d="M0.8 10.5 L3.5 4.5 H14.5 L12 10.5 Z" fill="none" stroke="#c4c4c4" stroke-width="1.2"/></svg>
<div class="t" style="left:62px;top:877px">Cartridge9x18mmPMM</div>
<div class="a" style="left:47px;top:898px;width:0;height:0;border-left:4px solid transparent;border-right:4px solid transparent;border-top:7px solid #6a6a6a"></div>
<svg class="a" style="left:60px;top:896px" width="15" height="11" viewBox="0 0 15 11"><path d="M0.8 10.5 V1 H5 L6.5 2.5 H12 V4.5" fill="none" stroke="#c4c4c4" stroke-width="1.2"/><path d="M0.8 10.5 L3.5 4.5 H14.5 L12 10.5 Z" fill="none" stroke="#c4c4c4" stroke-width="1.2"/></svg>
<div class="t" style="left:76px;top:893px">Materials</div>
<svg class="a" style="left:74px;top:912px" width="13" height="11" viewBox="0 0 13 11"><path d="M0.5 1 H5 L6.5 2.5 H12.5 V10.5 H0.5 Z" fill="#c4c4c4"/></svg>
<div class="t" style="left:90px;top:909px">Textures</div>
<svg class="a" style="left:32px;top:928px" width="13" height="11" viewBox="0 0 13 11"><path d="M0.5 1 H5 L6.5 2.5 H12.5 V10.5 H0.5 Z" fill="#c4c4c4"/></svg>
<div class="t" style="left:48.3px;top:925px">Scenes</div>
<div class="a" style="left:5px;top:944px;width:0;height:0;border-top:4px solid transparent;border-bottom:4px solid transparent;border-left:7px solid #6a6a6a"></div>
<svg class="a" style="left:18px;top:944px" width="13" height="11" viewBox="0 0 13 11"><path d="M0.5 1 H5 L6.5 2.5 H12.5 V10.5 H0.5 Z" fill="#c4c4c4"/></svg>
<div class="t bold" style="left:35px;top:941px;color:#d2d2d2">Packages</div>

<!-- breadcrumb -->
<div class="t" style="left:212px;top:768px">Assets</div>
<svg class="a" style="left:255px;top:771px" width="6" height="10" viewBox="0 0 6 10"><path d="M1 1 L5 5 L1 9" fill="none" stroke="#8a8a8a" stroke-width="1.2"/></svg>
<div class="t" style="left:267px;top:768px">Cartridge9x18mmPMM</div>
<svg class="a" style="left:402px;top:771px" width="6" height="10" viewBox="0 0 6 10"><path d="M1 1 L5 5 L1 9" fill="none" stroke="#8a8a8a" stroke-width="1.2"/></svg>
<div class="t bold" style="left:413px;top:768px;color:#d2d2d2">Cartridge9x18mmPMM</div>

<!-- grid -->
<svg class="a" style="left:231px;top:808px" width="48" height="41" viewBox="0 0 48 41"><path d="M0 3 Q0 0 3 0 H17 L21 5 H45 Q48 5 48 8 V38 Q48 41 45 41 H3 Q0 41 0 38 Z" fill="#c8c8c8"/></svg>
<div class="t" style="left:233px;top:862px;font-size:11px;letter-spacing:0.3px">Materials</div>
<div class="a" style="left:301px;top:799px;width:60px;height:60px;background:#4b5463"></div>
<svg class="a" style="left:301px;top:799px" width="60" height="60" viewBox="0 0 60 60"><defs><linearGradient id="tsel" x1="0" x2="1"><stop offset="0" stop-color="#140a06"/><stop offset="0.45" stop-color="#4a2a1e"/><stop offset="1" stop-color="#140a06"/></linearGradient></defs><path d="M12 55 L12 26 C13 16 17 12 22 12 C27 12 31 16 32 26 L32 55 Q22 59 12 55 Z" fill="url(#tsel)"/><path d="M29 44 L29 18 C30 11 33 9 36.5 9 C40 9 43 11 44 18 L44 44 Q36.5 47 29 44 Z" fill="url(#tsel)"/><path d="M12 33 H32 M29 24 H44" stroke="#1a0606" stroke-width="1.5"/></svg>
<div class="a" style="left:298px;top:863px;width:64px;height:14px;background:#4a4a4a;border-radius:3px"></div>
<div class="t" style="left:299px;top:862px;font-size:11px;letter-spacing:0.3px;color:#d0d0d0">Cartridge9...</div>
<div class="a" style="left:364px;top:801px;width:458px;height:57px;background:#555555;border-radius:6px"></div>
<div class="a" style="left:354px;top:821px;width:16px;height:16px;border-radius:50%;background:#e8e8e8;border:1px solid #444"></div>
<div class="a" style="left:357px;top:825px;width:0;height:0;border-top:4px solid transparent;border-bottom:4px solid transparent;border-right:6px solid #333"></div>

<svg class="a" style="left:392px;top:809px" width="30" height="43" viewBox="0 0 30 43"><defs><linearGradient id="t1" x1="0" x2="1"><stop offset="0" stop-color="#1a0e0a"/><stop offset="0.4" stop-color="#5a3428"/><stop offset="0.6" stop-color="#3e2418"/><stop offset="1" stop-color="#140a06"/></linearGradient><clipPath id="clt1"><path d="M0 36.55 C0 19.35 6.0 0 15.0 0 C24.0 0 30 19.35 30 36.55 Q15.0 43.86 0 36.55 Z"/></clipPath></defs><path d="M0 36.55 C0 19.35 6.0 0 15.0 0 C24.0 0 30 19.35 30 36.55 Q15.0 43.86 0 36.55 Z" fill="url(#t1)"/><g clip-path="url(#clt1)"><rect x="0" y="23.650000000000002" width="30" height="2" fill="#2a0a0a" opacity="0.7"/></g></svg><svg class="a" style="left:473px;top:804px" width="19" height="50" viewBox="0 0 19 50"><defs><linearGradient id="t2" x1="0" x2="1"><stop offset="0" stop-color="#1a0e0a"/><stop offset="0.4" stop-color="#5a3428"/><stop offset="0.6" stop-color="#3e2418"/><stop offset="1" stop-color="#140a06"/></linearGradient><clipPath id="clt2"><path d="M0.9500000000000001 47.5 L0.9500000000000001 15.0 C1.9000000000000001 5.0 5.7 0 9.5 0 C13.299999999999999 0 17.1 5.0 18.05 15.0 L18.05 47.5 Q9.5 51.0 0.9500000000000001 47.5 Z"/></clipPath></defs><path d="M0.9500000000000001 47.5 L0.9500000000000001 15.0 C1.9000000000000001 5.0 5.7 0 9.5 0 C13.299999999999999 0 17.1 5.0 18.05 15.0 L18.05 47.5 Q9.5 51.0 0.9500000000000001 47.5 Z" fill="url(#t2)"/><g clip-path="url(#clt2)"><rect x="0" y="17.5" width="19" height="2" fill="#2a0a0a" opacity="0.7"/></g></svg><svg class="a" style="left:545px;top:804px" width="26" height="50" viewBox="0 0 26 50"><defs><linearGradient id="t3" x1="0" x2="1"><stop offset="0" stop-color="#1a0e0a"/><stop offset="0.4" stop-color="#5a3428"/><stop offset="0.6" stop-color="#3e2418"/><stop offset="1" stop-color="#140a06"/></linearGradient><clipPath id="clt3"><path d="M0 3.0 Q13.0 -2.0 26 3.0 L24.7 47.0 Q13.0 51.5 1.3 47.0 Z"/></clipPath></defs><path d="M0 3.0 Q13.0 -2.0 26 3.0 L24.7 47.0 Q13.0 51.5 1.3 47.0 Z" fill="url(#t3)"/><g clip-path="url(#clt3)"></g></svg><svg class="a" style="left:621px;top:811px" width="28" height="38" viewBox="0 0 28 38"><defs><linearGradient id="t4" x1="0" x2="1"><stop offset="0" stop-color="#7a7a7a"/><stop offset="0.35" stop-color="#d8d8d8"/><stop offset="0.55" stop-color="#c0c0c0"/><stop offset="1" stop-color="#6a6a6a"/></linearGradient><clipPath id="clt4"><path d="M0 32.3 C0 17.1 5.6000000000000005 0 14.0 0 C22.400000000000002 0 28 17.1 28 32.3 Q14.0 38.76 0 32.3 Z"/></clipPath></defs><path d="M0 32.3 C0 17.1 5.6000000000000005 0 14.0 0 C22.400000000000002 0 28 17.1 28 32.3 Q14.0 38.76 0 32.3 Z" fill="url(#t4)"/><g clip-path="url(#clt4)"><path d="M7.0 5.7 V34.2" stroke="#5a5a5a" stroke-width="0.7" opacity="0.6"/><path d="M11.2 5.7 V34.2" stroke="#5a5a5a" stroke-width="0.7" opacity="0.6"/><path d="M15.4 5.7 V34.2" stroke="#5a5a5a" stroke-width="0.7" opacity="0.6"/><path d="M19.6 5.7 V34.2" stroke="#5a5a5a" stroke-width="0.7" opacity="0.6"/></g></svg><svg class="a" style="left:702px;top:805px" width="18" height="49" viewBox="0 0 18 49"><defs><linearGradient id="t5" x1="0" x2="1"><stop offset="0" stop-color="#7a7a7a"/><stop offset="0.35" stop-color="#d8d8d8"/><stop offset="0.55" stop-color="#c0c0c0"/><stop offset="1" stop-color="#6a6a6a"/></linearGradient><clipPath id="clt5"><path d="M0.9 46.55 L0.9 14.7 C1.8 4.9 5.3999999999999995 0 9.0 0 C12.6 0 16.2 4.9 17.099999999999998 14.7 L17.099999999999998 46.55 Q9.0 49.980000000000004 0.9 46.55 Z"/></clipPath></defs><path d="M0.9 46.55 L0.9 14.7 C1.8 4.9 5.3999999999999995 0 9.0 0 C12.6 0 16.2 4.9 17.099999999999998 14.7 L17.099999999999998 46.55 Q9.0 49.980000000000004 0.9 46.55 Z" fill="url(#t5)"/><g clip-path="url(#clt5)"><path d="M4.5 7.35 V44.1" stroke="#5a5a5a" stroke-width="0.7" opacity="0.6"/><path d="M7.2 7.35 V44.1" stroke="#5a5a5a" stroke-width="0.7" opacity="0.6"/><path d="M9.9 7.35 V44.1" stroke="#5a5a5a" stroke-width="0.7" opacity="0.6"/><path d="M12.6 7.35 V44.1" stroke="#5a5a5a" stroke-width="0.7" opacity="0.6"/></g></svg><svg class="a" style="left:776px;top:805px" width="22" height="47" viewBox="0 0 22 47"><defs><linearGradient id="t6" x1="0" x2="1"><stop offset="0" stop-color="#7a7a7a"/><stop offset="0.35" stop-color="#d8d8d8"/><stop offset="0.55" stop-color="#c0c0c0"/><stop offset="1" stop-color="#6a6a6a"/></linearGradient><clipPath id="clt6"><path d="M0 2.82 Q11.0 -1.8800000000000001 22 2.82 L20.9 44.18 Q11.0 48.410000000000004 1.1 44.18 Z"/></clipPath></defs><path d="M0 2.82 Q11.0 -1.8800000000000001 22 2.82 L20.9 44.18 Q11.0 48.410000000000004 1.1 44.18 Z" fill="url(#t6)"/><g clip-path="url(#clt6)"><path d="M5.5 7.05 V42.300000000000004" stroke="#5a5a5a" stroke-width="0.7" opacity="0.6"/><path d="M8.8 7.05 V42.300000000000004" stroke="#5a5a5a" stroke-width="0.7" opacity="0.6"/><path d="M12.1 7.05 V42.300000000000004" stroke="#5a5a5a" stroke-width="0.7" opacity="0.6"/><path d="M15.4 7.05 V42.300000000000004" stroke="#5a5a5a" stroke-width="0.7" opacity="0.6"/></g></svg>
<div class="t" style="left:384px;top:862px;font-size:11px;letter-spacing:0.3px">Bullet_P...</div>
<div class="t" style="left:455px;top:862px;font-size:11px;letter-spacing:0.3px">Cartridge...</div>
<div class="t" style="left:536px;top:862px;font-size:11px;letter-spacing:0.3px">Case_P...</div>
<div class="t" style="left:612px;top:862px;font-size:11px;letter-spacing:0.3px">Bullet_P...</div>
<div class="t" style="left:683px;top:862px;font-size:11px;letter-spacing:0.3px">Cartridge...</div>
<div class="t" style="left:764px;top:862px;font-size:11px;letter-spacing:0.3px">Case_P...</div>

<!-- path bar -->
<svg class="a" style="left:212px;top:1001px" width="13" height="13" viewBox="0 0 14 14"><path d="M7 1 L12.5 3.8 L7 6.6 L1.5 3.8 Z" fill="#3aa6d8"/><path d="M1.5 3.8 L7 6.6 L7 13 L1.5 10.2 Z" fill="#e8e8e8"/><path d="M12.5 3.8 L7 6.6 L7 13 L12.5 10.2 Z" fill="#5ec8f0"/></svg>
<div class="t" style="left:228.5px;top:1000px">Assets/Cartridge9x18mmPMM/Cartridge9x18mmPMM/Cartridge9x18PMM_FBX_unity.fbx</div>
<div class="a" style="left:1437px;top:1007px;width:57px;height:2px;background:#5a5a5a;border-radius:1px"></div>
<div class="a" style="left:1465px;top:1003px;width:10px;height:10px;border-radius:50%;background:#999"></div>

<!-- Inspector -->
<div class="tabbar" style="left:1510px;top:72px;width:410px"></div>
<div class="tab" style="left:1511px;top:72px;width:93px;border-top:2px solid #3a6088"></div>
<div class="a" style="left:1510px;top:92px;width:410px;height:926px;background:#383838"></div>
<div class="a" style="left:1510px;top:92px;width:398px;height:55px;background:#3b3b3b;border-bottom:1px solid #2a2a2a"></div>
<svg class="a" style="left:1520px;top:78px" width="11" height="11" viewBox="0 0 11 11"><circle cx="5.5" cy="5.5" r="5" fill="#d0d0d0"/><rect x="4.7" y="4.5" width="1.6" height="4.5" fill="#282828"/><rect x="4.7" y="2" width="1.6" height="1.6" fill="#282828"/></svg>
<div class="t" style="left:1535px;top:77px;color:#d2d2d2">Inspector</div>
<svg class="a" style="left:1884px;top:77px" width="10" height="11" viewBox="0 0 10 11"><rect x="0.5" y="5.5" width="9" height="5" fill="none" stroke="#c4c4c4" stroke-width="1"/><path d="M2 5.5 V3.5 A2.5 2.5 0 0 1 7 3" fill="none" stroke="#c4c4c4" stroke-width="1"/></svg>
<div class="a" style="left:1905px;top:77px;width:2px;height:2px;background:#c4c4c4;box-shadow:0 4px 0 #c4c4c4,0 8px 0 #c4c4c4"></div>
<div class="a" style="left:1517px;top:97px;width:32px;height:33px;background:#464646;border-radius:2px"></div>
<svg class="a" style="left:1517px;top:97px" width="32" height="33" viewBox="0 0 32 33"><path d="M10 30 L9 14 Q10 9 13 8 Q16 9 17 14 L16 30 Q13 31 10 30 Z" fill="#1a0e0a"/><path d="M16 26 L15 10 Q16 5 19 5 Q22 6 23 10 L22 26 Q19 27 16 26 Z" fill="#24140e"/></svg>
<div class="t" style="left:1557px;top:97px;font-size:13.5px;line-height:18px;color:#c8c8c8">Cartridge 9x18PMM_FBX_unity Import Settings</div>
<svg class="a" style="left:1862px;top:99px" width="11" height="11" viewBox="0 0 11 11"><circle cx="5.5" cy="5.5" r="5" fill="#d0d0d0"/><path d="M3.8 4.2 Q3.8 2.5 5.5 2.5 Q7.2 2.5 7.2 4 Q7.2 5 5.8 5.6 L5.8 6.8" fill="none" stroke="#333" stroke-width="1.3"/><rect x="5" y="7.6" width="1.5" height="1.5" fill="#333"/></svg>
<svg class="a" style="left:1878px;top:99px" width="11" height="11" viewBox="0 0 11 11"><path d="M0 3 H11 M0 8 H11" stroke="#c8c8c8" stroke-width="1.2"/><rect x="3" y="0.5" width="2" height="5" fill="#c8c8c8"/><rect x="7" y="5.5" width="2" height="5" fill="#c8c8c8"/></svg>
<div class="a" style="left:1898px;top:99px;width:2px;height:2px;background:#c4c4c4;box-shadow:0 4px 0 #c4c4c4,0 8px 0 #c4c4c4"></div>
<div class="btn" style="left:1860px;top:121px;width:42px;height:17px;background:#525252"></div>
<div class="t" style="left:1866px;top:121px;color:#d8d8d8">Open</div>
<!-- scrollbar -->
<div class="a" style="left:1908px;top:92px;width:12px;height:540px;background:#3e3e3e"></div>
<div class="a" style="left:1910px;top:97px;width:0;height:0;border-left:4px solid transparent;border-right:4px solid transparent;border-bottom:5px solid #c4c4c4"></div>
<div class="a" style="left:1910px;top:109px;width:8px;height:404px;background:#5f5f5f;border-radius:4px"></div>
<div class="a" style="left:1910px;top:622px;width:0;height:0;border-left:4px solid transparent;border-right:4px solid transparent;border-top:5px solid #c4c4c4"></div>
<!-- model tabs -->
<div class="a" style="left:1609px;top:151px;width:209px;height:22px;background:#585858;border-radius:3px;border:1px solid #2a2a2a"></div>
<div class="a" style="left:1609px;top:151px;width:47px;height:22px;background:#343434;border-radius:3px 0 0 3px;border:1px solid #2a2a2a"></div>
<div class="a" style="left:1684px;top:152px;width:1px;height:20px;background:#3a3a3a"></div>
<div class="a" style="left:1753px;top:152px;width:1px;height:20px;background:#3a3a3a"></div>
<div class="t" style="left:1614px;top:154px;color:#d8d8d8">Model</div>
<div class="t" style="left:1661px;top:154px;color:#d8d8d8">Rig</div>
<div class="t" style="left:1690px;top:154px;color:#d8d8d8">Animation</div>
<div class="t" style="left:1760px;top:154px;color:#d8d8d8">Materials</div>
<div class="t bold" style="left:1530px;top:181px;color:#d2d2d2">Scene</div><div class="t" style="left:1530px;top:200px">Scale Factor</div><div class="field" style="left:1675px;top:199px;width:227px;height:17px;border-radius:3px"></div><div class="t" style="left:1679px;top:200px;color:#d0d0d0">1</div><div class="t" style="left:1530px;top:220px">Convert Units</div><div class="cb" style="left:1675px;top:221px"></div><svg class="a" style="left:1677px;top:223px" width="10" height="10" viewBox="0 0 10 10"><path d="M1.5 5 L4 7.5 L8.5 2" fill="none" stroke="#e0e0e0" stroke-width="1.6"/></svg><div class="t" style="left:1700px;top:220px">1cm (File) to 0.01m (Unity)</div><div class="t" style="left:1530px;top:240px">Bake Axis Conversion</div><div class="cb" style="left:1675px;top:241px"></div><div class="t" style="left:1530px;top:260px">Import BlendShapes</div><div class="cb" style="left:1675px;top:261px"></div><svg class="a" style="left:1677px;top:263px" width="10" height="10" viewBox="0 0 10 10"><path d="M1.5 5 L4 7.5 L8.5 2" fill="none" stroke="#e0e0e0" stroke-width="1.6"/></svg><div class="t" style="left:1530px;top:280px">Import Visibility</div><div class="cb" style="left:1675px;top:281px"></div><svg class="a" style="left:1677px;top:283px" width="10" height="10" viewBox="0 0 10 10"><path d="M1.5 5 L4 7.5 L8.5 2" fill="none" stroke="#e0e0e0" stroke-width="1.6"/></svg><div class="t" style="left:1530px;top:300px">Import Cameras</div><div class="cb" style="left:1675px;top:301px"></div><svg class="a" style="left:1677px;top:303px" width="10" height="10" viewBox="0 0 10 10"><path d="M1.5 5 L4 7.5 L8.5 2" fill="none" stroke="#e0e0e0" stroke-width="1.6"/></svg><div class="t" style="left:1530px;top:320px">Import Lights</div><div class="cb" style="left:1675px;top:321px"></div><svg class="a" style="left:1677px;top:323px" width="10" height="10" viewBox="0 0 10 10"><path d="M1.5 5 L4 7.5 L8.5 2" fill="none" stroke="#e0e0e0" stroke-width="1.6"/></svg><div class="t" style="left:1530px;top:340px">Preserve Hierarchy</div><div class="cb" style="left:1675px;top:341px"></div><div class="t" style="left:1530px;top:360px">Sort Hierarchy By Name</div><div class="cb" style="left:1675px;top:361px"></div><svg class="a" style="left:1677px;top:363px" width="10" height="10" viewBox="0 0 10 10"><path d="M1.5 5 L4 7.5 L8.5 2" fill="none" stroke="#e0e0e0" stroke-width="1.6"/></svg><div class="t bold" style="left:1530px;top:380px;color:#d2d2d2">Meshes</div><div class="t" style="left:1530px;top:400px">Mesh Compression</div><div class="dd" style="left:1676px;top:399px;width:225px"></div><div class="t" style="left:1679px;top:399px;color:#d6d6d6">Off</div><div class="arr" style="left:1888px;top:405px;border-top-color:#d0d0d0;border-left-width:4px;border-right-width:4px;border-top-width:5px"></div><div class="t" style="left:1530px;top:420px">Read/Write Enabled</div><div class="cb" style="left:1675px;top:421px"></div><div class="t" style="left:1530px;top:440px">Optimize Mesh</div><div class="dd" style="left:1676px;top:439px;width:225px"></div><div class="t" style="left:1679px;top:439px;color:#d6d6d6">Everything</div><div class="arr" style="left:1888px;top:445px;border-top-color:#d0d0d0;border-left-width:4px;border-right-width:4px;border-top-width:5px"></div><div class="t" style="left:1530px;top:460px">Generate Colliders</div><div class="cb" style="left:1675px;top:461px"></div><div class="t bold" style="left:1530px;top:478px;color:#d2d2d2">Geometry</div><div class="t" style="left:1530px;top:497px">Keep Quads</div><div class="cb" style="left:1675px;top:498px"></div><div class="t" style="left:1530px;top:517px">Weld Vertices</div><div class="cb" style="left:1675px;top:518px"></div><svg class="a" style="left:1677px;top:520px" width="10" height="10" viewBox="0 0 10 10"><path d="M1.5 5 L4 7.5 L8.5 2" fill="none" stroke="#e0e0e0" stroke-width="1.6"/></svg><div class="t" style="left:1530px;top:537px">Index Format</div><div class="dd" style="left:1676px;top:536px;width:225px"></div><div class="t" style="left:1679px;top:536px;color:#d6d6d6">Auto</div><div class="arr" style="left:1888px;top:542px;border-top-color:#d0d0d0;border-left-width:4px;border-right-width:4px;border-top-width:5px"></div><div class="a" style="left:1530px;top:557px;width:143px;height:16px;overflow:hidden"><div class="t" style="left:0;top:0">Legacy Blend Shape Normals</div></div><div class="cb" style="left:1675px;top:558px"></div><div class="t" style="left:1530px;top:577px">Normals</div><div class="dd" style="left:1676px;top:576px;width:225px"></div><div class="t" style="left:1679px;top:576px;color:#d6d6d6">Import</div><div class="arr" style="left:1888px;top:582px;border-top-color:#d0d0d0;border-left-width:4px;border-right-width:4px;border-top-width:5px"></div><div class="t" style="left:1530px;top:597px">Blend Shape Normals</div><div class="dd" style="left:1676px;top:596px;width:225px"></div><div class="t" style="left:1679px;top:596px;color:#d6d6d6">Calculate</div><div class="arr" style="left:1888px;top:602px;border-top-color:#d0d0d0;border-left-width:4px;border-right-width:4px;border-top-width:5px"></div><div class="t" style="left:1530px;top:617px">Normals Mode</div><div class="dd" style="left:1676px;top:616px;width:225px"></div><div class="t" style="left:1679px;top:616px;color:#d6d6d6">Area And Angle Weighted</div><div class="arr" style="left:1888px;top:622px;border-top-color:#d0d0d0;border-left-width:4px;border-right-width:4px;border-top-width:5px"></div>
<!-- preview header -->
<div class="a" style="left:1510px;top:633px;width:410px;height:21px;background:#3e3e3e;border-top:1px solid #242424;border-bottom:1px solid #242424"></div>
<div class="t bold" style="left:1518px;top:637px;color:#d2d2d2">Cartridge9x18PMM_FBX_unity</div>
<div class="a" style="left:1704px;top:641px;width:197px;height:1px;background:#555"></div>
<div class="a" style="left:1704px;top:645px;width:197px;height:1px;background:#555"></div>
<div class="a" style="left:1911px;top:639px;width:2px;height:2px;background:#c4c4c4;box-shadow:0 4px 0 #c4c4c4,0 8px 0 #c4c4c4"></div>
<!-- preview -->
<div class="a" style="left:1510px;top:655px;width:410px;height:313px;background:#333333"></div>
<div class="a" style="left:1518px;top:941px;width:204px;height:21px;background:#38404a;opacity:0.6;border-radius:2px"></div>
<div class="a" style="left:1510px;top:968px;width:410px;height:50px;background:#3c3c3c;border-top:1px solid #262626"></div>
<div class="a" style="left:1897px;top:974px;width:16px;height:16px;border-radius:50%;background:#2c5aa0"></div>
<svg class="a" style="left:1900px;top:977px" width="10" height="10" viewBox="0 0 10 10"><path d="M0.5 4.5 L4.5 0.5 L9.5 0.5 L9.5 5 L5 9.5 Z" fill="#e8e8e8"/><circle cx="7" cy="3" r="1" fill="#2c5aa0"/></svg>
<div class="t" style="left:1515px;top:997px">AssetBundle</div>
<div class="dd" style="left:1607px;top:997px;width:228px"></div><div class="t" style="left:1610px;top:997px;color:#d6d6d6">None</div><div class="arr" style="left:1822px;top:1003px;border-top-color:#d0d0d0;border-left-width:4px;border-right-width:4px;border-top-width:5px"></div>
<div class="dd" style="left:1842px;top:997px;width:72px"></div><div class="t" style="left:1845px;top:997px;color:#d6d6d6">None</div><div class="arr" style="left:1901px;top:1003px;border-top-color:#d0d0d0;border-left-width:4px;border-right-width:4px;border-top-width:5px"></div>
<!-- status -->
<div class="a" style="left:0;top:1018px;width:1920px;height:22px;background:#191919"></div>

<svg class="a" style="left:1590px;top:700px" width="250" height="230" viewBox="1590 700 250 230"><defs><linearGradient id="pga" x1="1605" x2="1688" y1="0" y2="0" gradientUnits="userSpaceOnUse">
<stop offset="0" stop-color="#160d08"/><stop offset="0.08" stop-color="#342216"/><stop offset="0.28" stop-color="#62402c"/><stop offset="0.4" stop-color="#7a5038"/><stop offset="0.52" stop-color="#644030"/><stop offset="0.75" stop-color="#3a261a"/><stop offset="0.92" stop-color="#20140c"/><stop offset="1" stop-color="#120a06"/></linearGradient></defs>
<path d="M1608 756 L1629 717 Q1634 707 1646.5 707 Q1664 707 1669 717 L1685 756 L1688 756 L1688 889 L1683 892 L1683 905 L1688 905 L1688 919 Q1646.5 924 1605 919 L1605 905 L1612 905 L1612 892 L1605 889 L1605 756 Z" fill="url(#pga)"/>
<path d="M1604 756 Q1646.5 759 1689 756 L1689 767 Q1646.5 770 1604 767 Z" fill="#2a050a"/>
<path d="M1625.75 760 Q1638.2 762 1650.65 761" stroke="#8a1428" stroke-width="2" fill="none"/>
<path d="M1612 892 L1683 892 L1683 902 Q1646.5 905 1612 902 Z" fill="#0e0804" opacity="0.6"/>
<path d="M1609 916 Q1646.5 921 1684 916" stroke="#8a6248" stroke-width="1.5" fill="none" opacity="0.7"/>
<path d="M1605 905 L1688 905" stroke="#0e0804" stroke-width="1.2" opacity="0.8"/>
<defs><linearGradient id="pgb" x1="1741" x2="1820" y1="0" y2="0" gradientUnits="userSpaceOnUse">
<stop offset="0" stop-color="#160d08"/><stop offset="0.08" stop-color="#342216"/><stop offset="0.28" stop-color="#62402c"/><stop offset="0.4" stop-color="#7a5038"/><stop offset="0.52" stop-color="#644030"/><stop offset="0.75" stop-color="#3a261a"/><stop offset="0.92" stop-color="#20140c"/><stop offset="1" stop-color="#120a06"/></linearGradient></defs>
<path d="M1744 762 L1758 724 Q1763 714 1780.5 714 Q1794 714 1799 724 L1817 762 L1820 762 L1820 885 L1815 888 L1815 905 L1820 905 L1820 915 Q1780.5 920 1741 915 L1741 905 L1749 905 L1749 888 L1741 885 L1741 762 Z" fill="url(#pgb)"/>
<path d="M1740 762 Q1780.5 765 1821 762 L1821 772 Q1780.5 775 1740 772 Z" fill="#2a050a"/>
<path d="M1760.75 766 Q1772.6 768 1784.45 767" stroke="#8a1428" stroke-width="2" fill="none"/>
<path d="M1749 888 L1815 888 L1815 902 Q1780.5 905 1749 902 Z" fill="#0e0804" opacity="0.6"/>
<path d="M1745 912 Q1780.5 917 1816 912" stroke="#8a6248" stroke-width="1.5" fill="none" opacity="0.7"/>
<path d="M1741 905 L1820 905" stroke="#0e0804" stroke-width="1.2" opacity="0.8"/>
</svg>
<!-- status icons -->
<svg class="a" style="left:1819px;top:1021px" width="16" height="16" viewBox="0 0 16 16"><ellipse cx="8" cy="9" rx="4" ry="5" fill="#c8c8c8"/><path d="M1 3 L15 15 M3 6 H1 M13 6 H15 M3 10 H1 M13 10 H15" stroke="#c8c8c8" stroke-width="1.3"/></svg>
<svg class="a" style="left:1845px;top:1021px" width="16" height="16" viewBox="0 0 16 16"><ellipse cx="8" cy="3.5" rx="6" ry="2.5" fill="#c8c8c8"/><path d="M2 6 Q8 10 14 6 M2 9.5 Q8 13.5 14 9.5 M2 13 Q8 17 14 13" fill="none" stroke="#c8c8c8" stroke-width="1.6"/></svg>
<svg class="a" style="left:1872px;top:1021px" width="16" height="16" viewBox="0 0 16 16"><circle cx="8" cy="8" r="5.5" fill="none" stroke="#c8c8c8" stroke-width="1.5"/><circle cx="8" cy="8" r="2" fill="#c8c8c8"/><path d="M1 1 L15 15" stroke="#c8c8c8" stroke-width="1.5"/></svg>
<svg class="a" style="left:1898px;top:1021px" width="16" height="16" viewBox="0 0 16 16"><circle cx="8" cy="8" r="6.5" fill="none" stroke="#c8c8c8" stroke-width="1.3"/><path d="M4.5 8 L7 10.5 L11.5 5.5" fill="none" stroke="#c8c8c8" stroke-width="1.4"/></svg>
</body></html>
